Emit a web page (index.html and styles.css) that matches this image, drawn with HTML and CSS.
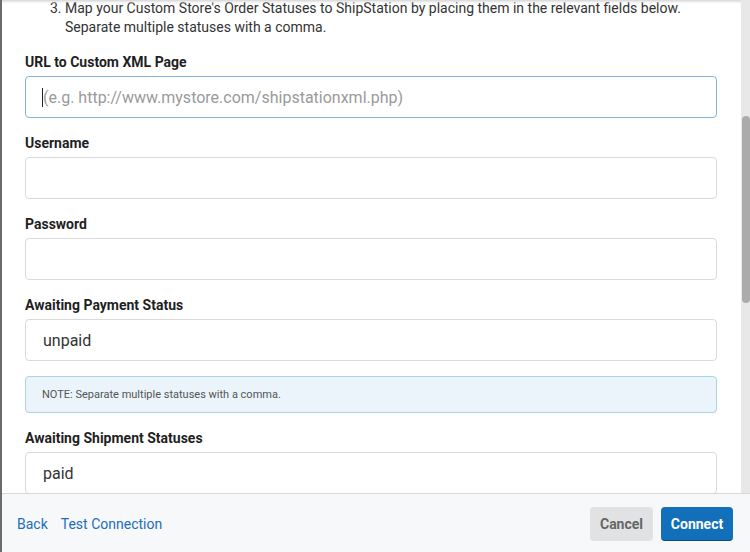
FILE: index.html
```html
<!DOCTYPE html>
<html>
<head>
<meta charset="utf-8">
<link rel="stylesheet" href="styles.css">
</head>
<body>
<div class="modal">
  <div class="main">
    <div class="shade"></div>
    <div class="content">
      <ol class="steps" start="3">
        <li>Map your Custom Store's Order Statuses to ShipStation by placing them in the relevant fields below. Separate multiple statuses with a comma.</li>
      </ol>
      <div class="group">
        <label class="label">URL to Custom XML Page</label>
        <div class="input focused"><span class="caret"></span><input type="text" placeholder="(e.g. http://www.mystore.com/shipstationxml.php)"></div>
      </div>
      <div class="group">
        <label class="label">Username</label>
        <div class="input"><input type="text"></div>
      </div>
      <div class="group">
        <label class="label">Password</label>
        <div class="input"><input type="password"></div>
      </div>
      <div class="group">
        <label class="label">Awaiting Payment Status</label>
        <div class="input"><input type="text" value="unpaid"></div>
      </div>
      <div class="note">NOTE: Separate multiple statuses with a comma.</div>
      <div class="group">
        <label class="label">Awaiting Shipment Statuses</label>
        <div class="input"><input type="text" value="paid"></div>
      </div>
    </div>
    <div class="scrollbar"><div class="thumb"></div></div>
  </div>
  <div class="footer">
    <div class="links">
      <a class="link">Back</a>
      <a class="link">Test Connection</a>
    </div>
    <div class="buttons">
      <button class="btn cancel">Cancel</button>
      <button class="btn connect">Connect</button>
    </div>
  </div>
</div>
</body>
</html>
```
FILE: styles.css
```css
html, body {
  margin: 0;
  padding: 0;
  background: #fff;
}
body {
  font-family: Roboto, "Liberation Sans", Arial, sans-serif;
  color: #333;
}
.modal {
  width: 750px;
  height: 552px;
  box-sizing: border-box;
  border-left: 2px solid #6b6b6b;
  display: flex;
  flex-direction: column;
  overflow: hidden;
}
.main {
  flex: 1;
  min-height: 0;
  display: flex;
  position: relative;
  overflow: hidden;
}
.shade {
  position: absolute;
  left: 0;
  top: 0;
  right: 9px;
  height: 4px;
  background: linear-gradient(#d6d6d6, rgba(230,230,230,0.4) 60%, rgba(255,255,255,0));
  z-index: 2;
}
.content {
  flex: 1;
  padding: 0 24px 0 23px;
  overflow: hidden;
}
.steps {
  margin: -1px 0 0 0;
  padding-left: 40px;
  font-size: 14px;
  line-height: 19px;
  color: #333;
}
.group {
  margin-top: 16px;
}
.label {
  display: block;
  font-size: 14px;
  font-weight: 700;
  line-height: 18px;
  color: #1f1f1f;
  margin-bottom: 5px;
}
.input {
  height: 42px;
  box-sizing: border-box;
  border: 1px solid #dadada;
  border-radius: 4px;
  background: #fff;
  display: flex;
  align-items: center;
  padding-left: 17px;
  position: relative;
}
.input.focused {
  border-color: #7db3de;
}
.caret {
  position: absolute;
  left: 16px;
  top: 11px;
  width: 1px;
  height: 19px;
  background: #222;
}
.input input {
  border: 0;
  outline: 0;
  padding: 0;
  margin: 0;
  width: 100%;
  font-family: Roboto, "Liberation Sans", Arial, sans-serif;
  font-size: 16px;
  color: #333;
  background: transparent;
}
.input input::placeholder {
  color: #9a9a9a;
}
.note {
  margin-top: 15px;
  height: 37px;
  box-sizing: border-box;
  border: 1px solid #a9d5e3;
  border-radius: 4px;
  background: #ebf4fa;
  padding-left: 16px;
  display: flex;
  align-items: center;
  font-size: 11px;
  color: #555;
}
.scrollbar {
  width: 9px;
  background: #e8e8e8;
  padding-top: 116px;
  box-sizing: border-box;
}
.thumb {
  width: 8px;
  margin-left: 1px;
  height: 187px;
  border-radius: 4px;
  background: #ababab;
}
.footer {
  height: 59px;
  box-sizing: border-box;
  border-top: 1px solid #d5d8dc;
  background: #f7f8fa;
  display: flex;
  align-items: center;
  justify-content: space-between;
  padding: 2px 17px 0 15px;
}
.links {
  display: flex;
  gap: 13px;
}
.link {
  font-size: 14px;
  color: #1c6eb8;
  cursor: pointer;
}
.buttons {
  display: flex;
  gap: 8px;
}
.btn {
  height: 34px;
  border: 0;
  border-radius: 4px;
  font-family: Roboto, "Liberation Sans", Arial, sans-serif;
  font-size: 14px;
  font-weight: 700;
  padding: 0 8px;
}
.cancel {
  width: 63px;
  background: #e1e2e3;
  color: #666;
}
.connect {
  width: 72px;
  background: #1170b9;
  color: #fff;
  border-bottom: 1px solid #0a4a7e;
}
```
